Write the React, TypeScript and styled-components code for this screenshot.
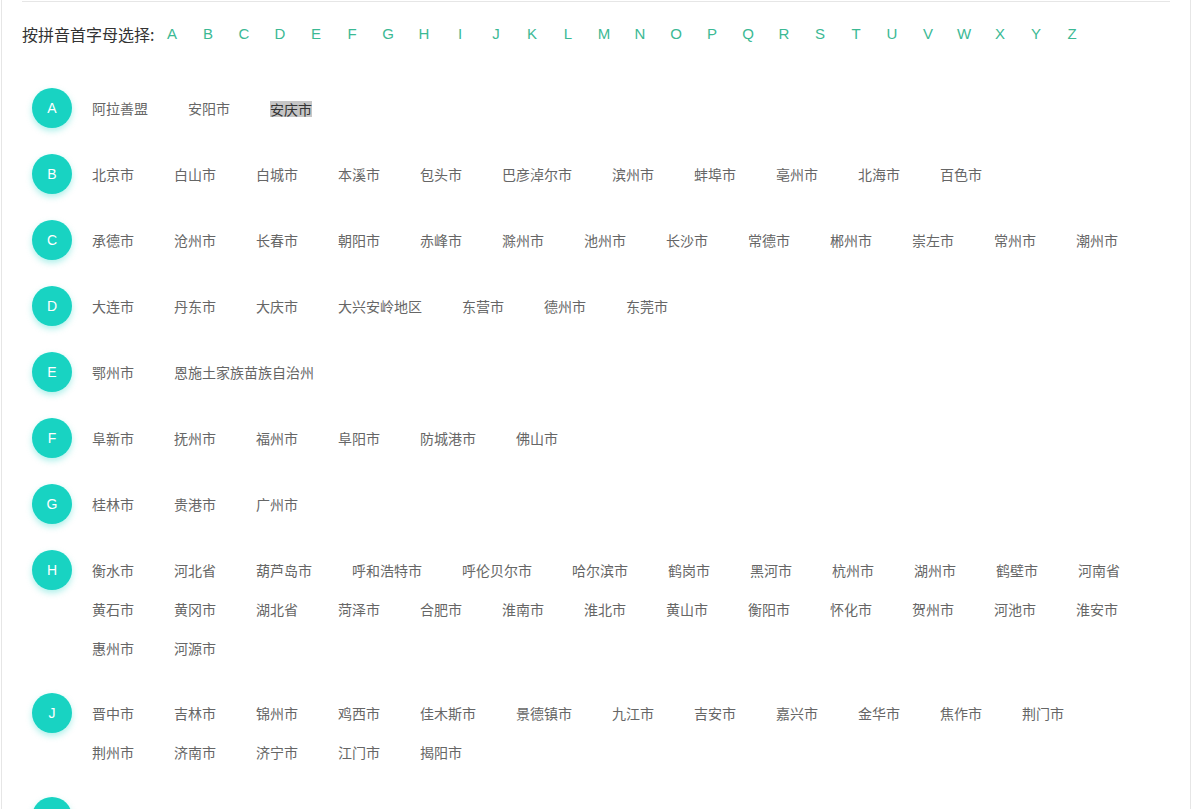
import React from "react";
import styled, { createGlobalStyle } from "styled-components";

const GlobalStyle = createGlobalStyle`
    html, body {
        margin: 0;
        padding: 0;
        background: #fff;
    }

    body {
        font-family: "Liberation Sans", "Noto Sans CJK SC", sans-serif;
    }
`;

const LETTERS = "ABCDEFGHIJKLMNOPQRSTUVWXYZ".split("");

type Group = { letter: string; cities: string[] };

const GROUPS: Group[] = [
    { letter: "A", cities: ["阿拉善盟", "安阳市", "安庆市"] },
    {
        letter: "B",
        cities: ["北京市", "白山市", "白城市", "本溪市", "包头市", "巴彦淖尔市", "滨州市", "蚌埠市", "亳州市", "北海市", "百色市"],
    },
    {
        letter: "C",
        cities: ["承德市", "沧州市", "长春市", "朝阳市", "赤峰市", "滁州市", "池州市", "长沙市", "常德市", "郴州市", "崇左市", "常州市", "潮州市"],
    },
    { letter: "D", cities: ["大连市", "丹东市", "大庆市", "大兴安岭地区", "东营市", "德州市", "东莞市"] },
    { letter: "E", cities: ["鄂州市", "恩施土家族苗族自治州"] },
    { letter: "F", cities: ["阜新市", "抚州市", "福州市", "阜阳市", "防城港市", "佛山市"] },
    { letter: "G", cities: ["桂林市", "贵港市", "广州市"] },
    {
        letter: "H",
        cities: [
            "衡水市", "河北省", "葫芦岛市", "呼和浩特市", "呼伦贝尔市", "哈尔滨市", "鹤岗市", "黑河市", "杭州市", "湖州市", "鹤壁市", "河南省",
            "黄石市", "黄冈市", "湖北省", "菏泽市", "合肥市", "淮南市", "淮北市", "黄山市", "衡阳市", "怀化市", "贺州市", "河池市", "淮安市",
            "惠州市", "河源市",
        ],
    },
    {
        letter: "J",
        cities: [
            "晋中市", "吉林市", "锦州市", "鸡西市", "佳木斯市", "景德镇市", "九江市", "吉安市", "嘉兴市", "金华市", "焦作市", "荆门市",
            "荆州市", "济南市", "济宁市", "江门市", "揭阳市",
        ],
    },
    { letter: "K", cities: ["开封市", "昆明市", "喀什地区"] },
];

const SELECTED = "安庆市";

export default function App() {
    return (
        <>
            <GlobalStyle/>
            <Page>
                <Panel>
                    <LetterBar>
                        <BarLabel>按拼音首字母选择:</BarLabel>
                        {LETTERS.map((l) => (
                            <LetterLink key={l}>{l}</LetterLink>
                        ))}
                    </LetterBar>

                    <GroupList>
                        {GROUPS.map((g) => (
                            <GroupRow key={g.letter}>
                                <Badge>{g.letter}</Badge>
                                <CityList>
                                    {g.cities.map((c) => (
                                        <City key={c} $selected={c === SELECTED}>{c}</City>
                                    ))}
                                </CityList>
                            </GroupRow>
                        ))}
                    </GroupList>
                </Panel>
            </Page>
        </>
    );
}

const Page = styled.div`
    margin: 0 1px;
    padding-top: 1px;
    min-height: 100vh;
    box-sizing: border-box;
    border-left: 1px solid #e6e6e6;
    border-right: 1px solid #e6e6e6;
    background: #fff;
`;

const Panel = styled.div`
    margin: 0 20px;
    border-top: 1px solid #e6e6e6;
`;

const LetterBar = styled.div`
    display: flex;
    align-items: center;
    padding: 22px 0;
    line-height: 20px;
`;

const BarLabel = styled.span`
    font-family: "Noto Sans CJK SC", sans-serif;
    font-size: 16px;
    color: #333;
    width: 132px;
    white-space: nowrap;
`;

const LetterLink = styled.a`
    width: 36px;
    text-align: center;
    font-family: "Liberation Sans", sans-serif;
    font-size: 15px;
    color: #3bb994;
    cursor: pointer;
`;

const GroupList = styled.div`
    padding-top: 22px;
`;

const GroupRow = styled.div`
    display: flex;
    align-items: flex-start;
    margin-bottom: 25px;
`;

const Badge = styled.div`
    flex: none;
    width: 40px;
    height: 40px;
    margin: 0 20px 1px 10px;
    border-radius: 50%;
    background: #18d3c2;
    box-shadow: 0 3px 6px rgba(24, 211, 194, 0.35);
    color: #fff;
    font-family: "Liberation Sans", sans-serif;
    font-size: 14px;
    display: flex;
    align-items: center;
    justify-content: center;
`;

const CityList = styled.div`
    flex: 1;
    padding-top: 1px;
    display: flex;
    flex-wrap: wrap;
`;

const City = styled.span<{ $selected?: boolean }>`
    margin-right: 40px;
    line-height: 39px;
    font-family: "Noto Sans CJK SC", sans-serif;
    font-size: 14px;
    color: ${(p) => (p.$selected ? "#333" : "#666")};
    white-space: nowrap;
    cursor: pointer;

    ${(p) =>
        p.$selected &&
        `
        align-self: center;
        line-height: 16px;
        background: #c6c6c6;
    `}
`;
